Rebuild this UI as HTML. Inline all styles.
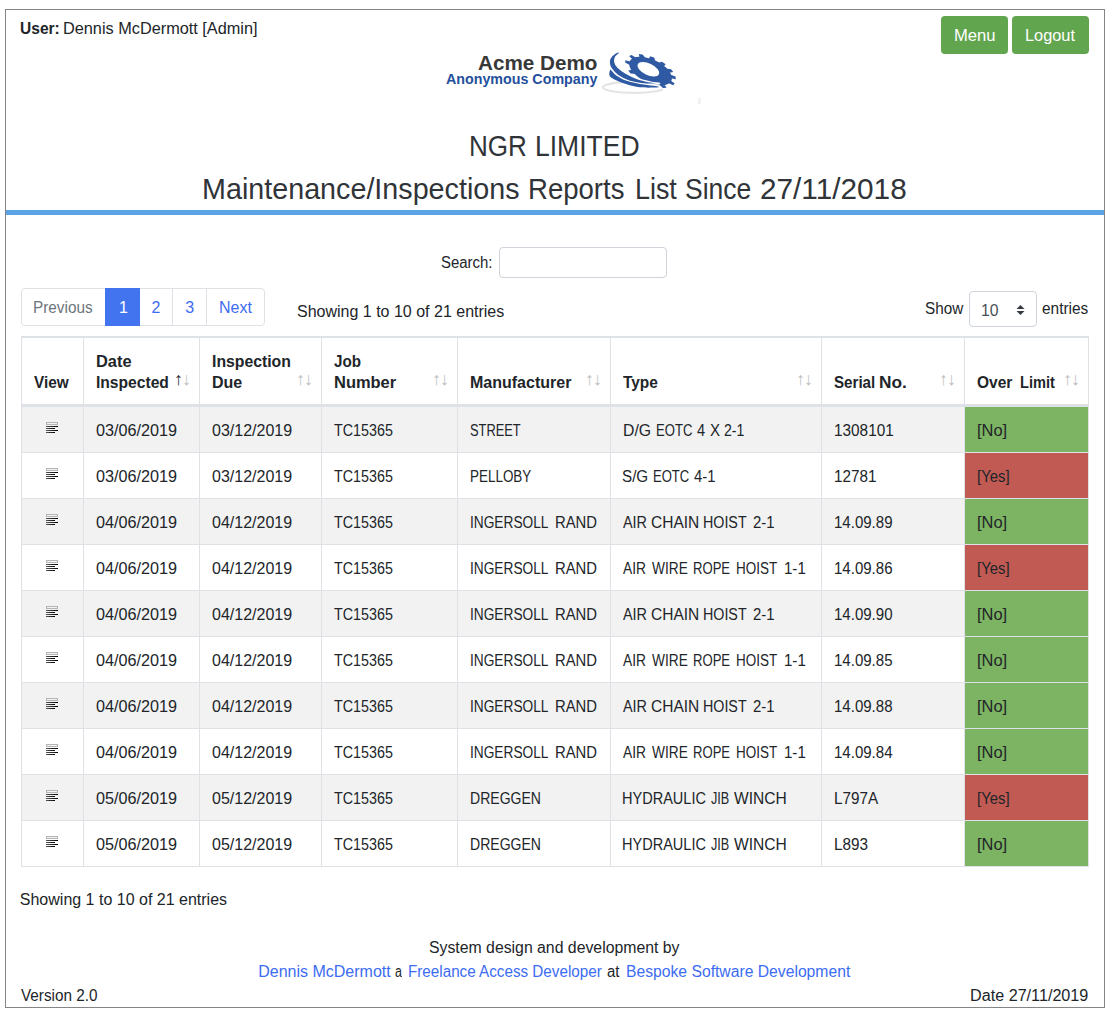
<!DOCTYPE html>
<html><head><meta charset="utf-8">
<title>Maintenance/Inspections Reports List</title>
<style>
html,body{margin:0;padding:0;background:#fff;}
body{width:1113px;height:1016px;position:relative;overflow:hidden;font-family:"Liberation Sans",sans-serif;font-size:16px;color:#212529;}
.a{position:absolute;white-space:nowrap;z-index:3;}
#frame{position:absolute;left:5px;top:9px;width:1098px;height:997px;border:1px solid #858585;}
#bar{position:absolute;left:6px;top:210px;width:1098px;height:5px;background:#5ca4e3;}
.btn{position:absolute;top:16px;height:38px;background:#62a54f;border-radius:4px;}
.pg{position:absolute;top:288px;height:36px;border:1px solid #dee2e6;background:#fff;}
.link{color:#3c6cf2;}
#sel{position:absolute;left:969px;top:291px;width:66px;height:34px;border:1px solid #ced4da;border-radius:4px;}
#search{position:absolute;left:499px;top:247px;width:166px;height:29px;border:1px solid #ced4da;border-radius:4px;}
.vl{position:absolute;top:336px;width:1px;height:531px;background:#dee2e6;}
.hl{position:absolute;left:21px;width:1068px;height:1px;background:#dee2e6;}
.stripe{position:absolute;left:22px;width:1066px;height:45px;background:#f2f2f2;}
.ok{position:absolute;left:965px;width:123px;height:45px;background:#7db463;}
.bad{position:absolute;left:965px;width:123px;height:45px;background:#c05a53;}
.arr{position:absolute;top:370px;line-height:18px;font-size:18px;opacity:.3;}
.ic{position:absolute;left:46px;}
</style></head><body>
<svg width="0" height="0" style="position:absolute">
 <defs>
  <linearGradient id="lg" x1="0" x2="1"><stop offset="0" stop-color="#555"/><stop offset="1" stop-color="#000"/></linearGradient>
  <symbol id="doc" viewBox="0 0 13 12">
   <g shape-rendering="crispEdges">
   <rect x="0.5" y="0.5" width="11" height="2" fill="#f4f4f4" stroke="#b4b4b4" stroke-width="1"/>
   <rect x="0" y="4" width="12" height="1" fill="url(#lg)"/>
   <rect x="0" y="6" width="9" height="1" fill="url(#lg)"/>
   <rect x="0" y="8" width="12" height="1" fill="url(#lg)"/>
   <rect x="0" y="10" width="9" height="1" fill="url(#lg)"/>
   </g>
  </symbol>
 </defs>
</svg>
<div id="frame"></div>

<div class="btn" style="left:941px;width:67px;"></div>
<div class="btn" style="left:1012px;width:77px;"></div>

<!-- logo gear -->
<svg style="position:absolute;left:600px;top:45px;" width="90" height="55" viewBox="0 0 90 55">
  <defs><clipPath id="gc"><rect x="0" y="0" width="63" height="55"/></clipPath></defs>
  <ellipse cx="34" cy="42.3" rx="31" ry="5.6" fill="none" stroke="#e4e4e4" stroke-width="2.2" clip-path="url(#gc)"/>
  <g transform="translate(50.5 26) rotate(25) scale(1 0.5)">
    <path fill="#2f5aa3" d="M-23.00,0.00 A23.0,23.0 0 1 1 23.00,0.00 A23.0,23.0 0 1 1 -23.00,0.00 Z M18.11,12.08 L21.55,16.76 L18.43,20.14 L13.49,17.08 Z M21.77,0.04 L27.22,2.03 L26.49,6.57 L20.69,6.76 Z M19.24,-10.18 L24.99,-10.99 L26.48,-6.63 L21.44,-3.75 Z M13.01,-17.45 L17.86,-20.64 L21.07,-17.35 L17.76,-12.58 Z M3.67,-21.46 L6.54,-26.50 L10.90,-25.03 L10.11,-19.27 Z M-6.72,-20.70 L-6.53,-26.51 L-1.98,-27.22 L-0.01,-21.77 Z M-15.44,-15.34 L-17.92,-20.59 L-14.21,-23.31 L-9.95,-19.36 Z M-21.01,-5.68 L-25.77,-9.01 L-23.89,-13.21 L-18.24,-11.88 Z M-20.78,6.47 L-26.58,6.20 L-27.25,1.65 L-21.77,-0.26 Z M-12.33,17.94 L-17.05,21.31 L-20.39,18.15 L-17.27,13.26 Z "/>
    <path fill="#fff" d="M-14.30,-1.40 A11.6,11.6 0 1 1 8.90,-1.40 A11.6,11.6 0 1 1 -14.30,-1.40 Z "/>
  </g>
  <path fill="#2f5aa3" stroke="#fff" stroke-width="1.2" d="M22.80,6.30 C22.13,6.23 17.60,6.73 15.50,7.90 C13.40,9.07 11.23,11.65 10.20,13.30 C9.17,14.95 9.13,16.12 9.30,17.80 C9.47,19.48 9.75,21.28 11.20,23.40 C12.65,25.52 15.03,28.40 18.00,30.50 C20.97,32.60 24.88,34.62 29.00,36.00 C33.12,37.38 38.17,38.28 42.70,38.80 C47.23,39.32 53.40,39.18 56.20,39.10 C59.00,39.02 60.40,38.65 59.50,38.30 C58.60,37.95 54.50,37.78 50.80,37.00 C47.10,36.22 41.47,35.07 37.30,33.60 C33.13,32.13 29.05,30.08 25.80,28.20 C22.55,26.32 19.60,24.03 17.80,22.30 C16.00,20.57 15.42,19.42 15.00,17.80 C14.58,16.18 14.55,14.18 15.30,12.60 C16.05,11.02 18.25,9.35 19.50,8.30 C20.75,7.25 23.47,6.37 22.80,6.30 Z"/>
  <path fill="#2f5aa3" d="M10.10,25.00 C9.80,25.87 8.70,29.13 9.60,30.80 C10.50,32.47 12.67,33.60 15.50,35.00 C18.33,36.40 22.52,37.98 26.60,39.20 C30.68,40.42 35.07,41.75 40.00,42.30 C44.93,42.85 53.12,42.58 56.20,42.50 C59.28,42.42 58.95,42.08 58.50,41.80 C58.05,41.52 56.58,41.27 53.50,40.80 C50.42,40.33 44.48,39.83 40.00,39.00 C35.52,38.17 30.57,37.23 26.60,35.80 C22.63,34.37 18.73,32.10 16.20,30.40 C13.67,28.70 12.42,26.50 11.40,25.60 C10.38,24.70 10.40,24.13 10.10,25.00 Z"/>
</svg>

<div style="position:absolute;left:698px;top:98px;width:3px;height:6px;background:#f1f2f2;"></div>
<div id="bar"></div>
<div id="search"></div>

<div class="pg" style="left:21px;width:83px;border-radius:4px 0 0 4px;"></div>
<div class="pg" style="left:105px;width:33px;background:#4274ef;border-color:#4274ef;z-index:2;"></div>
<div class="pg" style="left:139px;width:33px;"></div>
<div class="pg" style="left:172px;width:33px;"></div>
<div class="pg" style="left:206px;width:57px;border-radius:0 4px 4px 0;"></div>

<div id="sel">
<svg style="position:absolute;left:46px;top:13px;" width="9" height="11" viewBox="0 0 9 11"><path d="M4.5 0 L8.5 4 L0.5 4 Z M0.5 6 L8.5 6 L4.5 10 Z" fill="#343a40"/></svg></div>

<!-- table -->
<div class="hl" style="top:336px;height:2px;"></div>
<div class="hl" style="top:404px;height:3px;"></div>

<div class="arr" style="left:174px;opacity:1;">↑</div><div class="arr" style="left:182px;">↓</div>
<div class="arr" style="left:296px;">↑</div><div class="arr" style="left:304px;">↓</div>
<div class="arr" style="left:432px;">↑</div><div class="arr" style="left:440px;">↓</div>
<div class="arr" style="left:585px;">↑</div><div class="arr" style="left:593px;">↓</div>
<div class="arr" style="left:796px;">↑</div><div class="arr" style="left:804px;">↓</div>
<div class="arr" style="left:939px;">↑</div><div class="arr" style="left:947px;">↓</div>
<div class="arr" style="left:1063px;">↑</div><div class="arr" style="left:1071px;">↓</div>

<div class="stripe" style="top:407px"></div>
<div class="ok" style="top:407px"></div>
<div class="hl" style="top:452px"></div>
<svg class="ic" style="top:422px" width="13" height="12"><use href="#doc"/></svg>
<div class="bad" style="top:453px"></div>
<div class="hl" style="top:498px"></div>
<svg class="ic" style="top:468px" width="13" height="12"><use href="#doc"/></svg>
<div class="stripe" style="top:499px"></div>
<div class="ok" style="top:499px"></div>
<div class="hl" style="top:544px"></div>
<svg class="ic" style="top:514px" width="13" height="12"><use href="#doc"/></svg>
<div class="bad" style="top:545px"></div>
<div class="hl" style="top:590px"></div>
<svg class="ic" style="top:560px" width="13" height="12"><use href="#doc"/></svg>
<div class="stripe" style="top:591px"></div>
<div class="ok" style="top:591px"></div>
<div class="hl" style="top:636px"></div>
<svg class="ic" style="top:606px" width="13" height="12"><use href="#doc"/></svg>
<div class="ok" style="top:637px"></div>
<div class="hl" style="top:682px"></div>
<svg class="ic" style="top:652px" width="13" height="12"><use href="#doc"/></svg>
<div class="stripe" style="top:683px"></div>
<div class="ok" style="top:683px"></div>
<div class="hl" style="top:728px"></div>
<svg class="ic" style="top:698px" width="13" height="12"><use href="#doc"/></svg>
<div class="ok" style="top:729px"></div>
<div class="hl" style="top:774px"></div>
<svg class="ic" style="top:744px" width="13" height="12"><use href="#doc"/></svg>
<div class="stripe" style="top:775px"></div>
<div class="bad" style="top:775px"></div>
<div class="hl" style="top:820px"></div>
<svg class="ic" style="top:790px" width="13" height="12"><use href="#doc"/></svg>
<div class="ok" style="top:821px"></div>
<svg class="ic" style="top:836px" width="13" height="12"><use href="#doc"/></svg>
<div class="vl" style="left:21px;"></div>
<div class="vl" style="left:83px;"></div>
<div class="vl" style="left:199px;"></div>
<div class="vl" style="left:321px;"></div>
<div class="vl" style="left:457px;"></div>
<div class="vl" style="left:610px;"></div>
<div class="vl" style="left:821px;"></div>
<div class="vl" style="left:964px;"></div>
<div class="vl" style="left:1088px;"></div>

<div class="hl" style="top:866px;"></div>
<div class="a" style="left:20.23px;top:19px;line-height:20px;font-weight:bold;transform:scale(0.9718,1.0);transform-origin:0 15px;">User:</div>
<div class="a" style="left:63.18px;top:19px;line-height:20px;transform:scale(1.0175,1.0);transform-origin:0 15px;">Dennis McDermott [Admin]</div>
<div class="a" style="left:954px;top:26px;line-height:20px;color:#fff;transform:scale(1.0395,1.0);transform-origin:0 15px;">Menu</div>
<div class="a" style="left:1025px;top:26px;line-height:20px;color:#fff;transform:scale(1.0208,1.0);transform-origin:0 15px;">Logout</div>
<div class="a" style="left:478px;top:51px;line-height:24px;font-size:21px;font-weight:bold;color:#383838;transform:scale(0.9835,1.0);transform-origin:0 15px;">Acme Demo</div>
<div class="a" style="left:446px;top:70.3px;line-height:18px;font-size:15px;font-weight:bold;color:#244f9c;transform:scale(0.9509,1.0);transform-origin:0 15px;">Anonymous Company</div>
<div class="a" style="left:469.2px;top:126.3px;line-height:40px;font-size:29.5px;color:#303438;transform:scale(0.8839,1.0);transform-origin:0 15px;">NGR</div>
<div class="a" style="left:534.8px;top:126.3px;line-height:40px;font-size:29.5px;color:#303438;transform:scale(0.8982,1.0);transform-origin:0 15px;">LIMITED</div>
<div class="a" style="left:202.2px;top:169px;line-height:40px;font-size:29.5px;color:#303438;transform:scale(0.9731,1.0);transform-origin:0 15px;">Maintenance/Inspections</div>
<div class="a" style="left:528.2px;top:169px;line-height:40px;font-size:29.5px;color:#303438;transform:scale(0.9337,1.0);transform-origin:0 15px;">Reports</div>
<div class="a" style="left:634.9px;top:169px;line-height:40px;font-size:29.5px;color:#303438;transform:scale(0.9114,1.0);transform-origin:0 15px;">List</div>
<div class="a" style="left:684.7px;top:169px;line-height:40px;font-size:29.5px;color:#303438;transform:scale(0.8986,1.0);transform-origin:0 15px;">Since</div>
<div class="a" style="left:759.6px;top:169px;line-height:40px;font-size:29.5px;color:#303438;transform:scale(1.0084,1.0);transform-origin:0 15px;">27/11/2018</div>
<div class="a" style="left:441.4px;top:253px;line-height:20px;transform:scale(0.9321,1.0);transform-origin:0 15px;">Search:</div>
<div class="a" style="left:33.2px;top:298px;line-height:20px;color:#6c757d;transform:scale(0.9574,1.0);transform-origin:0 15px;">Previous</div>
<div class="a" style="left:119px;top:298px;line-height:20px;color:#fff;">1</div>
<div class="a" style="left:151.5px;top:298px;line-height:20px;color:#3c6cf2;">2</div>
<div class="a" style="left:185.2px;top:298px;line-height:20px;color:#3c6cf2;">3</div>
<div class="a" style="left:219px;top:298px;line-height:20px;color:#3c6cf2;">Next</div>
<div class="a" style="left:297px;top:302px;line-height:20px;">Showing 1 to 10 of 21 entries</div>
<div class="a" style="left:925.3px;top:299px;line-height:20px;transform:scale(0.9538,1.0);transform-origin:0 15px;">Show</div>
<div class="a" style="left:981.3px;top:301px;line-height:20px;color:#495057;transform:scale(0.9824,1.0);transform-origin:0 15px;">10</div>
<div class="a" style="left:1042px;top:299px;line-height:20px;transform:scale(0.9625,1.0);transform-origin:0 15px;">entries</div>
<div class="a" style="left:34px;top:373px;line-height:20px;font-weight:bold;transform:scale(0.9568,1.0);transform-origin:0 15px;">View</div>
<div class="a" style="left:96px;top:352px;line-height:20px;font-weight:bold;transform:scale(1.0242,1.0);transform-origin:0 15px;">Date</div>
<div class="a" style="left:96px;top:373px;line-height:20px;font-weight:bold;transform:scale(0.9753,1.0);transform-origin:0 15px;">Inspected</div>
<div class="a" style="left:212px;top:352px;line-height:20px;font-weight:bold;transform:scale(0.9859,1.0);transform-origin:0 15px;">Inspection</div>
<div class="a" style="left:212px;top:373px;line-height:20px;font-weight:bold;">Due</div>
<div class="a" style="left:334px;top:352px;line-height:20px;font-weight:bold;transform:scale(0.9500,1.0);transform-origin:0 15px;">Job</div>
<div class="a" style="left:334px;top:373px;line-height:20px;font-weight:bold;transform:scale(1.0283,1.0);transform-origin:0 15px;">Number</div>
<div class="a" style="left:470px;top:373px;line-height:20px;font-weight:bold;">Manufacturer</div>
<div class="a" style="left:623px;top:373px;line-height:20px;font-weight:bold;transform:scale(0.9639,1.0);transform-origin:0 15px;">Type</div>
<div class="a" style="left:833.9px;top:373px;line-height:20px;font-weight:bold;transform:scale(0.9465,1.0);transform-origin:0 15px;">Serial</div>
<div class="a" style="left:879.22px;top:373px;line-height:20px;font-weight:bold;transform:scale(1.0792,1.0);transform-origin:0 15px;">No.</div>
<div class="a" style="left:976.9px;top:373px;line-height:20px;font-weight:bold;transform:scale(0.9703,1.0);transform-origin:0 15px;">Over</div>
<div class="a" style="left:1019.79px;top:373px;line-height:20px;font-weight:bold;transform:scale(0.9108,1.0);transform-origin:0 15px;">Limit</div>
<div class="a" style="left:96px;top:421px;line-height:20px;transform:scale(1.0125,1.0);transform-origin:0 15px;">03/06/2019</div>
<div class="a" style="left:212px;top:421px;line-height:20px;">03/12/2019</div>
<div class="a" style="left:334px;top:421px;line-height:20px;transform:scale(0.8939,1.0);transform-origin:0 15px;">TC15365</div>
<div class="a" style="left:470px;top:421px;line-height:20px;transform:scale(0.8032,1.0);transform-origin:0 15px;">STREET</div>
<div class="a" style="left:622.61px;top:421px;line-height:20px;transform:scale(0.9852,1.0);transform-origin:0 15px;">D/G</div>
<div class="a" style="left:655.68px;top:421px;line-height:20px;transform:scale(0.8186,1.0);transform-origin:0 15px;">EOTC</div>
<div class="a" style="left:696.8px;top:421px;line-height:20px;transform:scale(0.9111,1.0);transform-origin:0 15px;">4</div>
<div class="a" style="left:710.0px;top:421px;line-height:20px;transform:scale(0.9400,1.0);transform-origin:0 15px;">X</div>
<div class="a" style="left:724.4px;top:421px;line-height:20px;transform:scale(0.8783,1.0);transform-origin:0 15px;">2-1</div>
<div class="a" style="left:834px;top:421px;line-height:20px;transform:scale(0.9590,1.0);transform-origin:0 15px;">1308101</div>
<div class="a" style="left:977px;top:421px;line-height:20px;transform:scale(1.0286,1.0);transform-origin:0 15px;">[No]</div>
<div class="a" style="left:96px;top:467px;line-height:20px;transform:scale(1.0125,1.0);transform-origin:0 15px;">03/06/2019</div>
<div class="a" style="left:212px;top:467px;line-height:20px;">03/12/2019</div>
<div class="a" style="left:334px;top:467px;line-height:20px;transform:scale(0.8939,1.0);transform-origin:0 15px;">TC15365</div>
<div class="a" style="left:470px;top:467px;line-height:20px;transform:scale(0.8403,1.0);transform-origin:0 15px;">PELLOBY</div>
<div class="a" style="left:621.95px;top:467px;line-height:20px;transform:scale(0.9500,1.0);transform-origin:0 15px;">S/G</div>
<div class="a" style="left:653.18px;top:467px;line-height:20px;transform:scale(0.8163,1.0);transform-origin:0 15px;">EOTC</div>
<div class="a" style="left:694.0px;top:467px;line-height:20px;transform:scale(0.9261,1.0);transform-origin:0 15px;">4-1</div>
<div class="a" style="left:834px;top:467px;line-height:20px;transform:scale(0.9535,1.0);transform-origin:0 15px;">12781</div>
<div class="a" style="left:977px;top:467px;line-height:20px;transform:scale(0.9303,1.0);transform-origin:0 15px;">[Yes]</div>
<div class="a" style="left:96px;top:513px;line-height:20px;transform:scale(1.0125,1.0);transform-origin:0 15px;">04/06/2019</div>
<div class="a" style="left:212px;top:513px;line-height:20px;">04/12/2019</div>
<div class="a" style="left:334px;top:513px;line-height:20px;transform:scale(0.8939,1.0);transform-origin:0 15px;">TC15365</div>
<div class="a" style="left:469.84px;top:513px;line-height:20px;transform:scale(0.8560,1.0);transform-origin:0 15px;">INGERSOLL</div>
<div class="a" style="left:554.67px;top:513px;line-height:20px;transform:scale(0.9273,1.0);transform-origin:0 15px;">RAND</div>
<div class="a" style="left:622.9px;top:513px;line-height:20px;transform:scale(0.9000,1.0);transform-origin:0 15px;">AIR</div>
<div class="a" style="left:650.73px;top:513px;line-height:20px;transform:scale(0.9688,1.0);transform-origin:0 15px;">CHAIN</div>
<div class="a" style="left:702.71px;top:513px;line-height:20px;transform:scale(0.8917,1.0);transform-origin:0 15px;">HOIST</div>
<div class="a" style="left:752.5px;top:513px;line-height:20px;transform:scale(0.9304,1.0);transform-origin:0 15px;">2-1</div>
<div class="a" style="left:834px;top:513px;line-height:20px;transform:scale(0.9393,1.0);transform-origin:0 15px;">14.09.89</div>
<div class="a" style="left:977px;top:513px;line-height:20px;transform:scale(1.0286,1.0);transform-origin:0 15px;">[No]</div>
<div class="a" style="left:96px;top:559px;line-height:20px;transform:scale(1.0125,1.0);transform-origin:0 15px;">04/06/2019</div>
<div class="a" style="left:212px;top:559px;line-height:20px;">04/12/2019</div>
<div class="a" style="left:334px;top:559px;line-height:20px;transform:scale(0.8939,1.0);transform-origin:0 15px;">TC15365</div>
<div class="a" style="left:469.84px;top:559px;line-height:20px;transform:scale(0.8560,1.0);transform-origin:0 15px;">INGERSOLL</div>
<div class="a" style="left:554.67px;top:559px;line-height:20px;transform:scale(0.9273,1.0);transform-origin:0 15px;">RAND</div>
<div class="a" style="left:623.1px;top:559px;line-height:20px;transform:scale(0.8615,1.0);transform-origin:0 15px;">AIR</div>
<div class="a" style="left:651.8px;top:559px;line-height:20px;transform:scale(0.8561,1.0);transform-origin:0 15px;">WIRE</div>
<div class="a" style="left:693.18px;top:559px;line-height:20px;transform:scale(0.8182,1.0);transform-origin:0 15px;">ROPE</div>
<div class="a" style="left:736.36px;top:559px;line-height:20px;transform:scale(0.8417,1.0);transform-origin:0 15px;">HOIST</div>
<div class="a" style="left:783.86px;top:559px;line-height:20px;transform:scale(0.9409,1.0);transform-origin:0 15px;">1-1</div>
<div class="a" style="left:834px;top:559px;line-height:20px;transform:scale(0.9393,1.0);transform-origin:0 15px;">14.09.86</div>
<div class="a" style="left:977px;top:559px;line-height:20px;transform:scale(0.9303,1.0);transform-origin:0 15px;">[Yes]</div>
<div class="a" style="left:96px;top:605px;line-height:20px;transform:scale(1.0125,1.0);transform-origin:0 15px;">04/06/2019</div>
<div class="a" style="left:212px;top:605px;line-height:20px;">04/12/2019</div>
<div class="a" style="left:334px;top:605px;line-height:20px;transform:scale(0.8939,1.0);transform-origin:0 15px;">TC15365</div>
<div class="a" style="left:469.84px;top:605px;line-height:20px;transform:scale(0.8560,1.0);transform-origin:0 15px;">INGERSOLL</div>
<div class="a" style="left:554.67px;top:605px;line-height:20px;transform:scale(0.9273,1.0);transform-origin:0 15px;">RAND</div>
<div class="a" style="left:622.9px;top:605px;line-height:20px;transform:scale(0.9000,1.0);transform-origin:0 15px;">AIR</div>
<div class="a" style="left:650.73px;top:605px;line-height:20px;transform:scale(0.9688,1.0);transform-origin:0 15px;">CHAIN</div>
<div class="a" style="left:702.71px;top:605px;line-height:20px;transform:scale(0.8917,1.0);transform-origin:0 15px;">HOIST</div>
<div class="a" style="left:752.5px;top:605px;line-height:20px;transform:scale(0.9304,1.0);transform-origin:0 15px;">2-1</div>
<div class="a" style="left:834px;top:605px;line-height:20px;transform:scale(0.9393,1.0);transform-origin:0 15px;">14.09.90</div>
<div class="a" style="left:977px;top:605px;line-height:20px;transform:scale(1.0286,1.0);transform-origin:0 15px;">[No]</div>
<div class="a" style="left:96px;top:651px;line-height:20px;transform:scale(1.0125,1.0);transform-origin:0 15px;">04/06/2019</div>
<div class="a" style="left:212px;top:651px;line-height:20px;">04/12/2019</div>
<div class="a" style="left:334px;top:651px;line-height:20px;transform:scale(0.8939,1.0);transform-origin:0 15px;">TC15365</div>
<div class="a" style="left:469.84px;top:651px;line-height:20px;transform:scale(0.8560,1.0);transform-origin:0 15px;">INGERSOLL</div>
<div class="a" style="left:554.67px;top:651px;line-height:20px;transform:scale(0.9273,1.0);transform-origin:0 15px;">RAND</div>
<div class="a" style="left:623.1px;top:651px;line-height:20px;transform:scale(0.8615,1.0);transform-origin:0 15px;">AIR</div>
<div class="a" style="left:651.8px;top:651px;line-height:20px;transform:scale(0.8561,1.0);transform-origin:0 15px;">WIRE</div>
<div class="a" style="left:693.18px;top:651px;line-height:20px;transform:scale(0.8182,1.0);transform-origin:0 15px;">ROPE</div>
<div class="a" style="left:736.36px;top:651px;line-height:20px;transform:scale(0.8417,1.0);transform-origin:0 15px;">HOIST</div>
<div class="a" style="left:783.86px;top:651px;line-height:20px;transform:scale(0.9409,1.0);transform-origin:0 15px;">1-1</div>
<div class="a" style="left:834px;top:651px;line-height:20px;transform:scale(0.9393,1.0);transform-origin:0 15px;">14.09.85</div>
<div class="a" style="left:977px;top:651px;line-height:20px;transform:scale(1.0286,1.0);transform-origin:0 15px;">[No]</div>
<div class="a" style="left:96px;top:697px;line-height:20px;transform:scale(1.0125,1.0);transform-origin:0 15px;">04/06/2019</div>
<div class="a" style="left:212px;top:697px;line-height:20px;">04/12/2019</div>
<div class="a" style="left:334px;top:697px;line-height:20px;transform:scale(0.8939,1.0);transform-origin:0 15px;">TC15365</div>
<div class="a" style="left:469.84px;top:697px;line-height:20px;transform:scale(0.8560,1.0);transform-origin:0 15px;">INGERSOLL</div>
<div class="a" style="left:554.67px;top:697px;line-height:20px;transform:scale(0.9273,1.0);transform-origin:0 15px;">RAND</div>
<div class="a" style="left:622.9px;top:697px;line-height:20px;transform:scale(0.9000,1.0);transform-origin:0 15px;">AIR</div>
<div class="a" style="left:650.73px;top:697px;line-height:20px;transform:scale(0.9688,1.0);transform-origin:0 15px;">CHAIN</div>
<div class="a" style="left:702.71px;top:697px;line-height:20px;transform:scale(0.8917,1.0);transform-origin:0 15px;">HOIST</div>
<div class="a" style="left:752.5px;top:697px;line-height:20px;transform:scale(0.9304,1.0);transform-origin:0 15px;">2-1</div>
<div class="a" style="left:834px;top:697px;line-height:20px;transform:scale(0.9393,1.0);transform-origin:0 15px;">14.09.88</div>
<div class="a" style="left:977px;top:697px;line-height:20px;transform:scale(1.0286,1.0);transform-origin:0 15px;">[No]</div>
<div class="a" style="left:96px;top:743px;line-height:20px;transform:scale(1.0125,1.0);transform-origin:0 15px;">04/06/2019</div>
<div class="a" style="left:212px;top:743px;line-height:20px;">04/12/2019</div>
<div class="a" style="left:334px;top:743px;line-height:20px;transform:scale(0.8939,1.0);transform-origin:0 15px;">TC15365</div>
<div class="a" style="left:469.84px;top:743px;line-height:20px;transform:scale(0.8560,1.0);transform-origin:0 15px;">INGERSOLL</div>
<div class="a" style="left:554.67px;top:743px;line-height:20px;transform:scale(0.9273,1.0);transform-origin:0 15px;">RAND</div>
<div class="a" style="left:623.1px;top:743px;line-height:20px;transform:scale(0.8615,1.0);transform-origin:0 15px;">AIR</div>
<div class="a" style="left:651.8px;top:743px;line-height:20px;transform:scale(0.8561,1.0);transform-origin:0 15px;">WIRE</div>
<div class="a" style="left:693.18px;top:743px;line-height:20px;transform:scale(0.8182,1.0);transform-origin:0 15px;">ROPE</div>
<div class="a" style="left:736.36px;top:743px;line-height:20px;transform:scale(0.8417,1.0);transform-origin:0 15px;">HOIST</div>
<div class="a" style="left:783.86px;top:743px;line-height:20px;transform:scale(0.9409,1.0);transform-origin:0 15px;">1-1</div>
<div class="a" style="left:834px;top:743px;line-height:20px;transform:scale(0.9393,1.0);transform-origin:0 15px;">14.09.84</div>
<div class="a" style="left:977px;top:743px;line-height:20px;transform:scale(1.0286,1.0);transform-origin:0 15px;">[No]</div>
<div class="a" style="left:96px;top:789px;line-height:20px;transform:scale(1.0125,1.0);transform-origin:0 15px;">05/06/2019</div>
<div class="a" style="left:212px;top:789px;line-height:20px;">05/12/2019</div>
<div class="a" style="left:334px;top:789px;line-height:20px;transform:scale(0.8939,1.0);transform-origin:0 15px;">TC15365</div>
<div class="a" style="left:470px;top:789px;line-height:20px;transform:scale(0.8772,1.0);transform-origin:0 15px;">DREGGEN</div>
<div class="a" style="left:622.49px;top:789px;line-height:20px;transform:scale(0.9077,1.0);transform-origin:0 15px;">HYDRAULIC</div>
<div class="a" style="left:710.5px;top:789px;line-height:20px;transform:scale(0.7913,1.0);transform-origin:0 15px;">JIB</div>
<div class="a" style="left:734.0px;top:789px;line-height:20px;transform:scale(0.9736,1.0);transform-origin:0 15px;">WINCH</div>
<div class="a" style="left:834px;top:789px;line-height:20px;transform:scale(0.9533,1.0);transform-origin:0 15px;">L797A</div>
<div class="a" style="left:977px;top:789px;line-height:20px;transform:scale(0.9303,1.0);transform-origin:0 15px;">[Yes]</div>
<div class="a" style="left:96px;top:835px;line-height:20px;transform:scale(1.0125,1.0);transform-origin:0 15px;">05/06/2019</div>
<div class="a" style="left:212px;top:835px;line-height:20px;">05/12/2019</div>
<div class="a" style="left:334px;top:835px;line-height:20px;transform:scale(0.8939,1.0);transform-origin:0 15px;">TC15365</div>
<div class="a" style="left:470px;top:835px;line-height:20px;transform:scale(0.8772,1.0);transform-origin:0 15px;">DREGGEN</div>
<div class="a" style="left:622.49px;top:835px;line-height:20px;transform:scale(0.9077,1.0);transform-origin:0 15px;">HYDRAULIC</div>
<div class="a" style="left:710.5px;top:835px;line-height:20px;transform:scale(0.7913,1.0);transform-origin:0 15px;">JIB</div>
<div class="a" style="left:734.0px;top:835px;line-height:20px;transform:scale(0.9736,1.0);transform-origin:0 15px;">WINCH</div>
<div class="a" style="left:834px;top:835px;line-height:20px;transform:scale(0.9559,1.0);transform-origin:0 15px;">L893</div>
<div class="a" style="left:977px;top:835px;line-height:20px;transform:scale(1.0286,1.0);transform-origin:0 15px;">[No]</div>
<div class="a" style="left:19.8px;top:890px;line-height:20px;">Showing 1 to 10 of 21 entries</div>
<div class="a" style="left:428.7px;top:938px;line-height:20px;transform:scale(0.9881,1.0);transform-origin:0 15px;">System design and development by</div>
<div class="a" style="left:258.2px;top:962px;line-height:20px;color:#3c6cf2;">Dennis McDermott</div>
<div class="a" style="left:395.2px;top:962px;line-height:20px;transform:scale(0.7778,1.0);transform-origin:0 15px;">a</div>
<div class="a" style="left:408.3px;top:962px;line-height:20px;color:#3c6cf2;transform:scale(0.9512,1.0);transform-origin:0 15px;">Freelance Access Developer</div>
<div class="a" style="left:606.9px;top:962px;line-height:20px;transform:scale(0.9357,1.0);transform-origin:0 15px;">at</div>
<div class="a" style="left:625.6px;top:962px;line-height:20px;color:#3c6cf2;transform:scale(0.9811,1.0);transform-origin:0 15px;">Bespoke Software Development</div>
<div class="a" style="left:21px;top:986px;line-height:20px;transform:scale(0.9563,1.0);transform-origin:0 15px;">Version 2.0</div>
<div class="a" style="left:969.8px;top:986px;line-height:20px;transform:scale(1.0103,1.0);transform-origin:0 15px;">Date 27/11/2019</div>
</body></html>
